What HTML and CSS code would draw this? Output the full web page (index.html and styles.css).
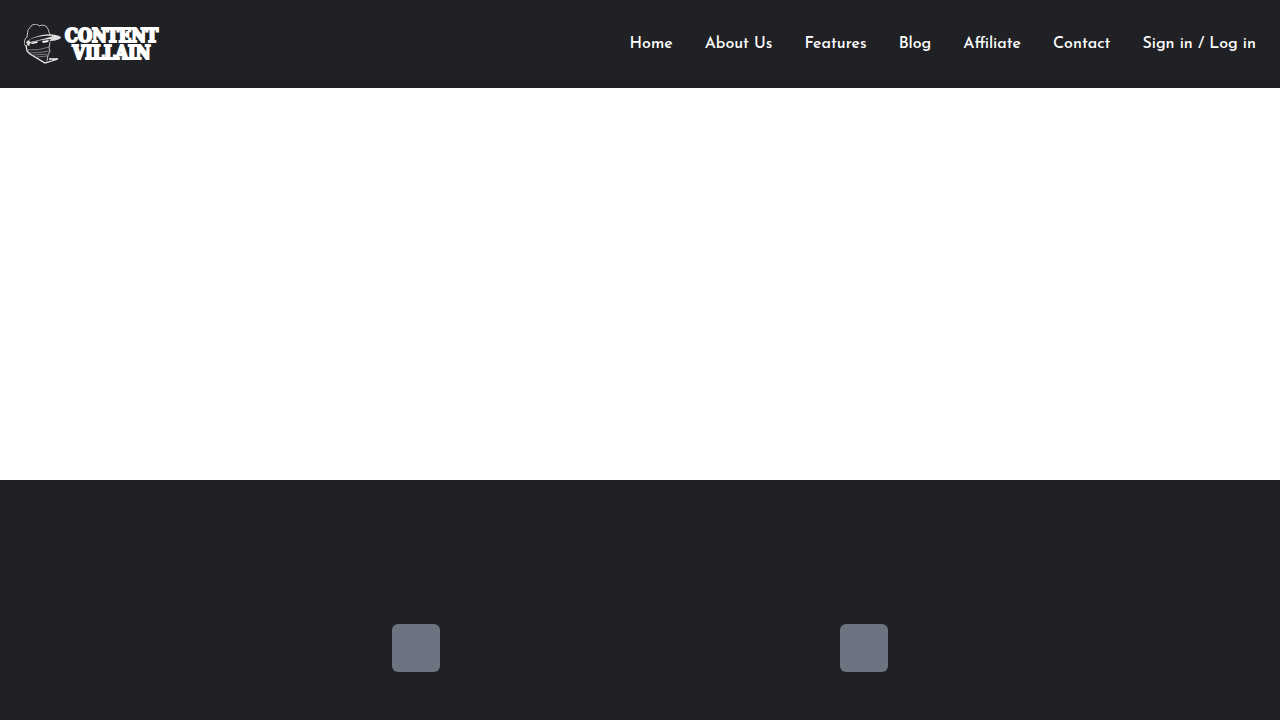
FILE: index.html
```html
<!DOCTYPE html>
<html lang="en">
  <head>
    <meta charset="UTF-8" />
    <meta name="viewport" content="width=device-width, initial-scale=1.0" />
    <title>Content Villain</title>
    <link rel="stylesheet" href="styles.css">
  </head>
  <body>
    <header class="header">
      <a class="logo" href="#">
        <svg class="logo-icon" viewBox="0 0 38 40" aria-hidden="true">
          <g fill="none" stroke="#bbb" stroke-linejoin="round" stroke-linecap="round">
            <path d="M3 13 L4 6 L8 1 L13 0 L15 2 L18 1 L22 2 L24 5 L26 11" />
            <path d="M3 13 L1 15 L0 20 L2 22" />
            <path d="M26 18 L25 24 L26 27 L24 31 L23 37" />
            <path d="M4 26 Q15 27 25 23 M6 29 Q16 29 25 27 M10 31 L23 30 M13 33 L23 32" stroke-width="0.6" />
          </g>
          <path d="M2 21 L3 27 L6 30 L21 39 L34 35 L25 35" fill="none" stroke="#eee" stroke-width="1.3" />
          <path d="M2 18 Q8 13 18 11 Q30 9 37 13 Q37 16 27 17 Q13 17 4 22 Z" fill="#ddd" />
          <path d="M5 16 Q16 11 29 12 Q20 15 6 18 Z" fill="#202124" />
          <path d="M5 20 Q12 16 27 15 L25 18 Q16 21 8 22 Z" fill="#202124" />
          <path d="M7 19 L14 17 L13 19 L8 20 Z M18 17 L25 16 L24 18 L19 19 Z" fill="#fff" />
        </svg>
        <span class="logo-text">
          <span>CONTENT</span>
          <span>VILLAIN</span>
        </span>
      </a>
      <nav class="nav">
        <a href="#">Home</a>
        <a href="#">About Us</a>
        <a href="#">Features</a>
        <a href="#">Blog</a>
        <a href="#">Affiliate</a>
        <a href="#">Contact</a>
        <a href="#">Sign in / Log in</a>
      </nav>
    </header>

    <main class="hero"></main>

    <section class="features">
      <div class="features-grid">
        <div class="feature">
          <div class="feature-icon"></div>
        </div>
        <div class="feature">
          <div class="feature-icon"></div>
        </div>
      </div>
    </section>
  </body>
</html>
```
FILE: styles.css
```css
body {
  margin: 0;
  min-height: 100vh;
  display: flex;
  flex-direction: column;
  background-color: #fff;
  font-family: "Josefin Sans", Lato, sans-serif;
}
.header {
  display: flex;
  justify-content: space-between;
  align-items: center;
  padding: 24px;
  background-color: #202124;
}
.logo {
  display: flex;
  align-items: center;
  gap: 3px;
  color: #fff;
  text-decoration: none;
}
.logo-icon {
  width: 38px;
  height: 40px;
}
.logo-text {
  display: flex;
  flex-direction: column;
  align-items: center;
  font-family: "DejaVu Serif Condensed", "DejaVu Serif", serif;
  font-size: 18px;
  font-weight: 700;
  line-height: 17px;
  -webkit-text-stroke: 2px #fff;
}
.nav {
  display: flex;
  gap: 32px;
}
.nav a {
  color: #fff;
  font-size: 16px;
  font-weight: 500;
  line-height: 24px;
  text-decoration: none;
}
.nav a:hover {
  text-decoration: underline;
}
.hero {
  min-height: 392px;
}
.features {
  flex: 1;
  padding: 144px 24px 48px;
  background-color: #202124;
}
.features-grid {
  display: grid;
  grid-template-columns: repeat(2, 1fr);
  max-width: 896px;
  margin: 0 auto;
}
.feature {
  display: flex;
  justify-content: center;
}
.feature-icon {
  width: 48px;
  height: 48px;
  border-radius: 6px;
  background-color: #6b7280;
}
```
